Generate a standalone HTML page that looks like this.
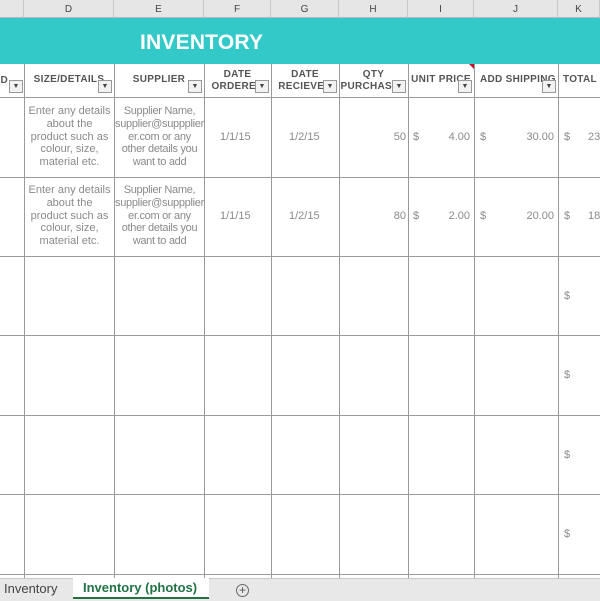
<!DOCTYPE html>
<html><head><style>
body{margin:0;width:600px;height:600px;overflow:hidden;background:#fff;font-family:"Liberation Sans",sans-serif;position:relative}
.a{position:absolute}
.ch{top:0;height:18px;background:#e6e6e6;border-right:1px solid #c8c8c8;border-bottom:1px solid #b8b8b8;font-size:10px;color:#444;text-align:center;line-height:19px;box-sizing:border-box}
.v{top:64px;height:514px;width:1px;background:#9a9a9a}
.h{left:0;width:600px;height:1px;background:#9a9a9a}
.hd{top:64px;height:33px;font-size:10px;color:#555;font-weight:bold;text-align:center;line-height:12px;display:flex;align-items:center;justify-content:center;letter-spacing:.3px;overflow:hidden;white-space:nowrap}
.dd{width:14px;height:13px;border:1px solid #999;background:#f2f2f2;box-sizing:border-box;font-size:7px;color:#444;text-align:center;line-height:12px;top:80px}
.t{font-size:11px;color:#8a8a8a;text-align:center;line-height:12.8px;white-space:nowrap}
.n{font-size:11px;color:#8a8a8a}
</style></head><body>
<div class="a ch" style="left:0;width:24px"></div>
<div class="a ch" style="left:24px;width:90px">D</div>
<div class="a ch" style="left:114px;width:90px">E</div>
<div class="a ch" style="left:204px;width:67px">F</div>
<div class="a ch" style="left:271px;width:68px">G</div>
<div class="a ch" style="left:339px;width:69px">H</div>
<div class="a ch" style="left:408px;width:66px">I</div>
<div class="a ch" style="left:474px;width:84px">J</div>
<div class="a ch" style="left:558px;width:42px">K</div>
<div class="a" style="left:0;top:18px;width:600px;height:46px;background:#33c9c9"></div>
<div class="a" style="left:140px;top:31px;font-size:21px;font-weight:bold;color:#fff;letter-spacing:.2px">INVENTORY</div>

<div class="a hd" style="left:0;width:8px;justify-content:flex-end">D</div>
<div class="a hd" style="left:24px;width:90px;top:66px;height:28px;align-items:flex-start;padding-top:8px;box-sizing:border-box">SIZE/DETAILS</div>
<div class="a hd" style="left:114px;width:90px;top:66px;height:28px;align-items:flex-start;padding-top:8px;box-sizing:border-box">SUPPLIER</div>
<div class="a hd" style="left:204px;width:67px;white-space:normal">DATE<br>ORDERED</div>
<div class="a hd" style="left:271px;width:68px;white-space:normal">DATE<br>RECIEVED</div>
<div class="a hd" style="left:339px;width:69px;white-space:normal">QTY<br>PURCHASED</div>
<div class="a hd" style="left:408px;width:66px;top:66px;height:28px;align-items:flex-start;padding-top:8px;box-sizing:border-box">UNIT PRICE</div>
<div class="a hd" style="left:474px;width:84px;top:66px;height:28px;align-items:flex-start;padding-top:8px;box-sizing:border-box;justify-content:flex-start;padding-left:6px">ADD SHIPPING</div>
<div class="a hd" style="left:558px;width:42px;top:66px;height:28px;align-items:flex-start;padding-top:8px;box-sizing:border-box;justify-content:flex-start;padding-left:5px">TOTAL P</div>
<div class="a" style="left:469px;top:64px;width:0;height:0;border-left:5px solid transparent;border-top:5px solid #c0142a"></div>
<div class="a dd" style="left:9px">▼</div>
<div class="a dd" style="left:98px">▼</div>
<div class="a dd" style="left:188px">▼</div>
<div class="a dd" style="left:255px">▼</div>
<div class="a dd" style="left:323px">▼</div>
<div class="a dd" style="left:392px">▼</div>
<div class="a dd" style="left:458px">▼</div>
<div class="a dd" style="left:542px">▼</div>

<div class="a v" style="left:24px"></div><div class="a v" style="left:114px"></div><div class="a v" style="left:204px"></div><div class="a v" style="left:271px"></div><div class="a v" style="left:339px"></div><div class="a v" style="left:408px"></div><div class="a v" style="left:474px"></div><div class="a v" style="left:558px"></div>
<div class="a h" style="top:97px"></div><div class="a h" style="top:177px"></div><div class="a h" style="top:256px"></div><div class="a h" style="top:335px"></div><div class="a h" style="top:415px"></div><div class="a h" style="top:494px"></div><div class="a h" style="top:574px"></div>

<div class="a t" style="left:25px;top:105px;width:89px">Enter any details<br>about the<br>product such as<br>colour, size,<br>material etc.</div>
<div class="a t" style="left:115px;top:105px;width:89px;letter-spacing:-.3px">Supplier Name,<br>supplier@suppplier<br>er.com or any<br>other details you<br>want to add</div>
<div class="a t" style="left:25px;top:184px;width:89px">Enter any details<br>about the<br>product such as<br>colour, size,<br>material etc.</div>
<div class="a t" style="left:115px;top:184px;width:89px;letter-spacing:-.3px">Supplier Name,<br>supplier@suppplier<br>er.com or any<br>other details you<br>want to add</div>

<div class="a n" style="left:220px;top:131px">1/1/15</div><div class="a n" style="left:289px;top:131px">1/2/15</div>
<div class="a n" style="left:339px;top:131px;width:67px;text-align:right">50</div>
<div class="a n" style="left:413px;top:131px">$</div><div class="a n" style="left:408px;top:131px;width:62px;text-align:right">4.00</div>
<div class="a n" style="left:480px;top:131px">$</div><div class="a n" style="left:474px;top:131px;width:80px;text-align:right">30.00</div>
<div class="a n" style="left:564px;top:131px">$</div><div class="a n" style="left:588px;top:131px">230</div>

<div class="a n" style="left:220px;top:210px">1/1/15</div><div class="a n" style="left:289px;top:210px">1/2/15</div>
<div class="a n" style="left:339px;top:210px;width:67px;text-align:right">80</div>
<div class="a n" style="left:413px;top:210px">$</div><div class="a n" style="left:408px;top:210px;width:62px;text-align:right">2.00</div>
<div class="a n" style="left:480px;top:210px">$</div><div class="a n" style="left:474px;top:210px;width:80px;text-align:right">20.00</div>
<div class="a n" style="left:564px;top:210px">$</div><div class="a n" style="left:588px;top:210px">180</div>

<div class="a n" style="left:564px;top:290px">$</div>
<div class="a n" style="left:564px;top:369px">$</div>
<div class="a n" style="left:564px;top:449px">$</div>
<div class="a n" style="left:564px;top:528px">$</div>

<div class="a" style="left:0;top:578px;width:600px;height:22px;background:#e8e8e8;border-top:1px solid #c8c8c8"></div>
<div class="a" style="left:4px;top:581px;font-size:13px;color:#444">Inventory</div>
<div class="a" style="left:73px;top:578px;width:136px;height:21px;background:#fff;border-bottom:2px solid #217346;box-sizing:border-box"></div>
<div class="a" style="left:83px;top:580px;font-size:13px;font-weight:bold;color:#217346">Inventory (photos)</div>
<div class="a" style="left:236px;top:584px;width:13px;height:13px;border:1px solid #666;border-radius:50%;box-sizing:border-box;font-size:12px;line-height:11px;text-align:center;color:#555">+</div>
</body></html>
